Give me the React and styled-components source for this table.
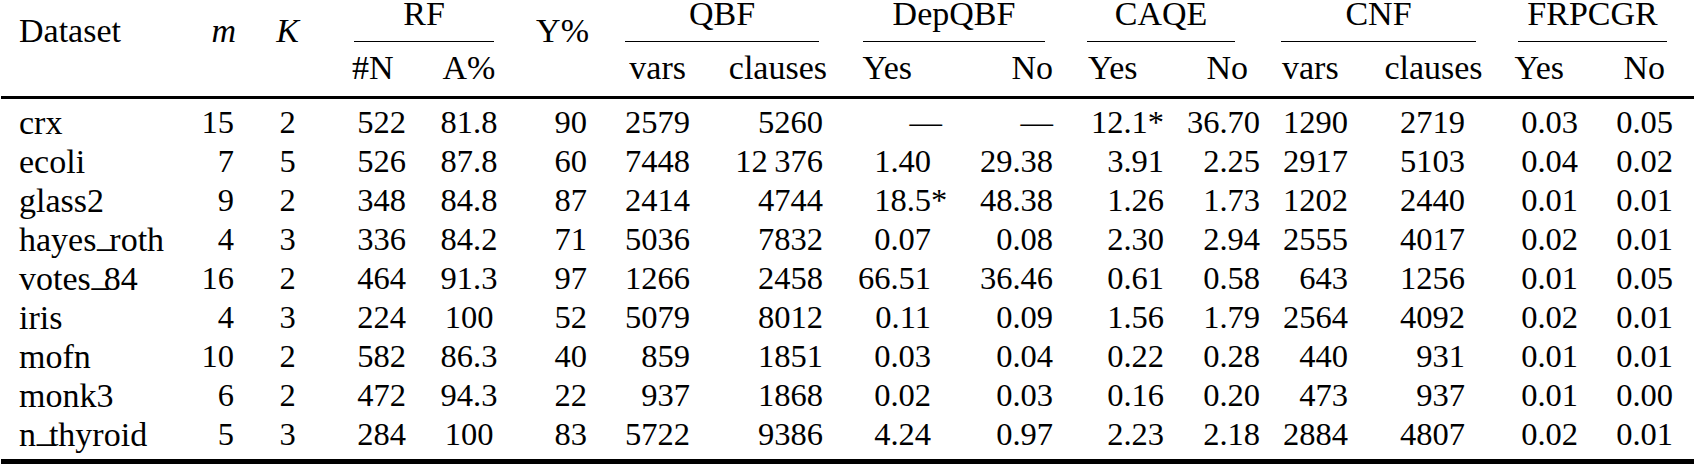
import React from "react";
import styled, { createGlobalStyle } from "styled-components";

const Global = createGlobalStyle`
  html, body { margin: 0; padding: 0; background: #fff; overflow: hidden; }
  #root { width: 1696px; }
`;

const TEXT_FONT = `"Liberation Serif", "Times New Roman", serif`;

const cols = [
  { w: 180, h: { a: "left", l: 19, r: 0 }, d: { a: "left", l: 19, r: 0 } },
  { w: 70, h: { a: "right", l: 0, r: 14 }, d: { a: "right", l: 0, r: 16 } },
  { w: 84, h: { a: "center", l: 0, r: 9 }, d: { a: "center", l: 0, r: 9 } },
  { w: 86, h: { a: "left", l: 18, r: 0 }, d: { a: "right", l: 0, r: 14 } },
  { w: 98, h: { a: "center", l: 0, r: 0 }, d: { a: "center", l: 0, r: 0 } },
  { w: 88, h: { a: "right", l: 0, r: 17 }, d: { a: "right", l: 0, r: 19 } },
  { w: 102, h: { a: "right", l: 0, r: 22 }, d: { a: "right", l: 0, r: 18 } },
  { w: 134, h: { a: "right", l: 0, r: 15 }, d: { a: "right", l: 0, r: 19 } },
  { w: 116, h: { a: "right", l: 0, r: 46 }, d: { a: "right", l: 0, r: 27, hang: true } },
  { w: 110, h: { a: "right", l: 0, r: 15 }, d: { a: "right", l: 0, r: 15 } },
  { w: 108, h: { a: "left", l: 20, r: 0 }, d: { a: "right", l: 0, r: 12 } },
  { w: 94, h: { a: "right", l: 0, r: 22 }, d: { a: "right", l: 0, r: 10 } },
  { w: 90, h: { a: "left", l: 12, r: 0 }, d: { a: "right", l: 0, r: 12 } },
  { w: 136, h: { a: "center", l: 11, r: 0 }, d: { a: "right", l: 0, r: 31 } },
  { w: 102, h: { a: "right", l: 0, r: 34 }, d: { a: "right", l: 0, r: 20 } },
  { w: 98, h: { a: "right", l: 0, r: 31 }, d: { a: "right", l: 0, r: 23 } },
];

const Table = styled.div`
  display: grid;
  grid-template-columns: ${(p) => p.$tracks};
  font-family: ${TEXT_FONT};
  color: #000;
  font-size: 34px;
`;

const SpanHead = styled.div`
  grid-row: 1 / span 2;
  padding-top: 17px;
  line-height: 28px;
  white-space: nowrap;
  text-align: ${(p) => p.$a};
  padding-left: ${(p) => p.$l}px;
  padding-right: ${(p) => p.$r}px;
`;

const GroupHead = styled.div`
  grid-column: span 2;
  margin: 0 ${(p) => p.$trimR}px 0 ${(p) => p.$trimL}px;
  line-height: 28px;
  padding-bottom: 13px;
  border-bottom: 1.6px solid #000;
  text-align: center;
  white-space: nowrap;
`;

const SubHead = styled.div`
  grid-row: 2;
  padding-top: 6px;
  line-height: 39px;
  white-space: nowrap;
  text-align: ${(p) => p.$a};
  padding-left: ${(p) => p.$l}px;
  padding-right: ${(p) => p.$r}px;
`;

const Rule = styled.div`
  grid-column: 1 / -1;
  height: ${(p) => p.$h}px;
  background: #000;
  margin: ${(p) => p.$mt}px 2px ${(p) => p.$mb}px 1px;
`;

const Cell = styled.div`
  height: 39.1px;
  line-height: 39.1px;
  white-space: nowrap;
  font-size: ${(p) => (p.$num ? "32.5px" : "34px")};
  text-align: ${(p) => p.$a};
  padding-left: ${(p) => p.$l}px;
  padding-right: ${(p) => p.$r}px;
`;

const Math = styled.span`
  font-style: italic;
`;

const Under = styled.span`
  letter-spacing: -0.14em;
  position: relative;
  top: -0.12em;
  margin-left: 0.02em;
`;

const Hang = styled.span`
  margin-right: ${(p) => p.$by}em;
`;

const rows = [
  ["crx", "15", "2", "522", "81.8", "90", "2579", "5260", "—", "—", "12.1*", "36.70", "1290", "2719", "0.03", "0.05"],
  ["ecoli", "7", "5", "526", "87.8", "60", "7448", "12\u2009376", "1.40", "29.38", "3.91", "2.25", "2917", "5103", "0.04", "0.02"],
  ["glass2", "9", "2", "348", "84.8", "87", "2414", "4744", "18.5*", "48.38", "1.26", "1.73", "1202", "2440", "0.01", "0.01"],
  ["hayes_roth", "4", "3", "336", "84.2", "71", "5036", "7832", "0.07", "0.08", "2.30", "2.94", "2555", "4017", "0.02", "0.01"],
  ["votes_84", "16", "2", "464", "91.3", "97", "1266", "2458", "66.51", "36.46", "0.61", "0.58", "643", "1256", "0.01", "0.05"],
  ["iris", "4", "3", "224", "100", "52", "5079", "8012", "0.11", "0.09", "1.56", "1.79", "2564", "4092", "0.02", "0.01"],
  ["mofn", "10", "2", "582", "86.3", "40", "859", "1851", "0.03", "0.04", "0.22", "0.28", "440", "931", "0.01", "0.01"],
  ["monk3", "6", "2", "472", "94.3", "22", "937", "1868", "0.02", "0.03", "0.16", "0.20", "473", "937", "0.01", "0.00"],
  ["n_thyroid", "5", "3", "284", "100", "83", "5722", "9386", "4.24", "0.97", "2.23", "2.18", "2884", "4807", "0.02", "0.01"],
];

const groups = [
  { label: "RF", trimL: 20, trimR: 24 },
  { label: "QBF", trimL: 19, trimR: 23 },
  { label: "DepQBF", trimL: 21, trimR: 23 },
  { label: "CAQE", trimL: 19, trimR: 35 },
  { label: "CNF", trimL: 11, trimR: 20 },
  { label: "FRPCGR", trimL: 22, trimR: 29 },
];

const subHeads = [
  [3, "#N"], [4, "A%"],
  [6, "vars"], [7, "clauses"],
  [8, "Yes"], [9, "No"],
  [10, "Yes"], [11, "No"],
  [12, "vars"], [13, "clauses"],
  [14, "Yes"], [15, "No"],
];

function Name({ text }) {
  const parts = text.split("_");
  return (
    <>
      {parts.map((p, i) => (
        <React.Fragment key={i}>
          {i > 0 && <Under>_</Under>}
          {p}
        </React.Fragment>
      ))}
    </>
  );
}

function Value({ v, hang }) {
  if (hang && v.endsWith("*")) {
    return (
      <>
        {v.slice(0, -1)}
        <Hang $by={-0.5}>*</Hang>
      </>
    );
  }
  if (hang && v === "—") {
    return <Hang $by={-0.34}>{v}</Hang>;
  }
  return v;
}

export default function App() {
  const tracks = cols.map((c) => `${c.w}px`).join(" ");
  const sh = (i) => cols[i].h;
  return (
    <>
      <Global />
      <Table $tracks={tracks}>
        <SpanHead $a={sh(0).a} $l={sh(0).l} $r={sh(0).r}>Dataset</SpanHead>
        <SpanHead $a={sh(1).a} $l={sh(1).l} $r={sh(1).r}><Math>m</Math></SpanHead>
        <SpanHead $a={sh(2).a} $l={sh(2).l} $r={sh(2).r}><Math>K</Math></SpanHead>
        <GroupHead $trimL={groups[0].trimL} $trimR={groups[0].trimR}>{groups[0].label}</GroupHead>
        <SpanHead $a={sh(5).a} $l={sh(5).l} $r={sh(5).r}>Y%</SpanHead>
        {groups.slice(1).map((g) => (
          <GroupHead key={g.label} $trimL={g.trimL} $trimR={g.trimR}>{g.label}</GroupHead>
        ))}
        {subHeads.map(([i, t]) => (
          <SubHead key={i} $a={sh(i).a} $l={sh(i).l} $r={sh(i).r} style={{ gridColumn: i + 1 }}>
            {t}
          </SubHead>
        ))}
        <Rule $h={3} $mt={9} $mb={3.5} />
        {rows.map((r) =>
          r.map((v, i) => (
            <Cell key={r[0] + i} $num={i > 0} $a={cols[i].d.a} $l={cols[i].d.l} $r={cols[i].d.r}>
              {i === 0 ? <Name text={v} /> : <Value v={v} hang={cols[i].d.hang} />}
            </Cell>
          ))
        )}
        <Rule $h={6} $mt={4.5} $mb={0} />
      </Table>
    </>
  );
}
